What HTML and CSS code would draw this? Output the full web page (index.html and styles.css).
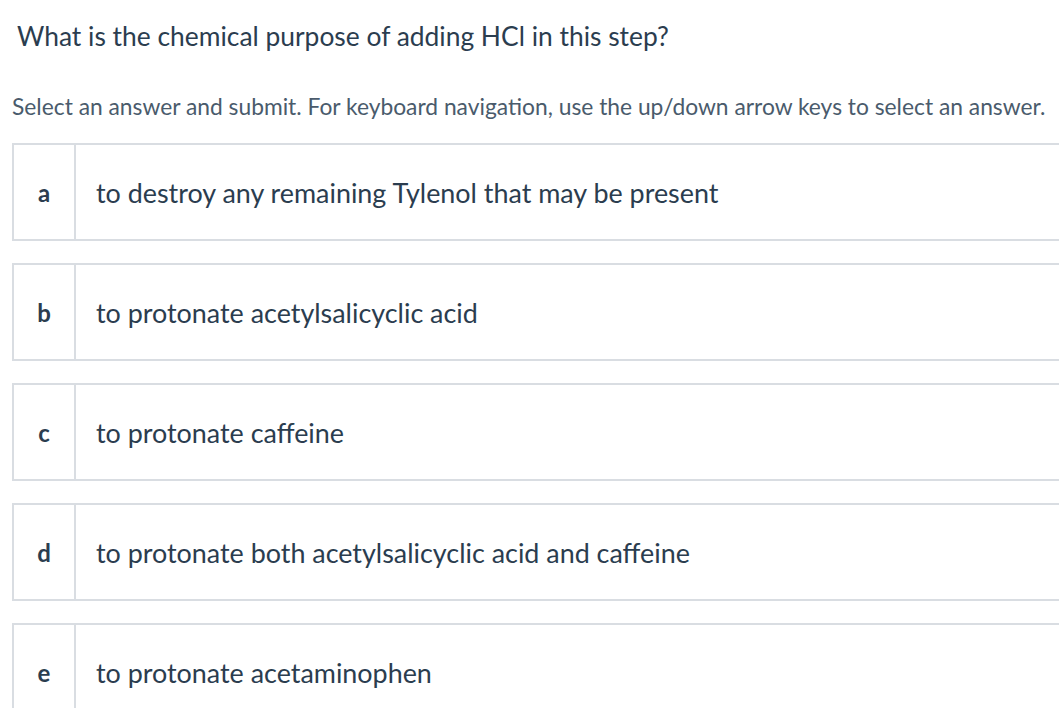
FILE: index.html
```html
<!DOCTYPE html>
<html>
<head>
<meta charset="utf-8">
<link rel="stylesheet" href="styles.css">
</head>
<body>
<div class="page">
  <h1 class="question">What is the chemical purpose of adding HCl in this step?</h1>
  <p class="instructions">Select an answer and submit. For keyboard navigation, use the up/down arrow keys to select an answer.</p>
  <ul class="options">
    <li class="option"><span class="letter">a</span><span class="text">to destroy any remaining Tylenol that may be present</span></li>
    <li class="option"><span class="letter">b</span><span class="text">to protonate acetylsalicyclic acid</span></li>
    <li class="option"><span class="letter">c</span><span class="text">to protonate caffeine</span></li>
    <li class="option"><span class="letter">d</span><span class="text">to protonate both acetylsalicyclic acid and caffeine</span></li>
    <li class="option"><span class="letter">e</span><span class="text">to protonate acetaminophen</span></li>
  </ul>
</div>
</body>
</html>
```

FILE: styles.css
```css
html, body {
  margin: 0;
  padding: 0;
  overflow: hidden;
  background: #ffffff;
}
body {
  font-family: "Lato", "Liberation Sans", sans-serif;
  color: #2b3d4f;
}
.page {
  padding: 0 0 0 12px;
}
.question {
  margin: 0;
  padding: 20px 0 0 5px;
  font-size: 26.4px;
  line-height: 32px;
  font-weight: 400;
  color: #2b3d4f;
  white-space: nowrap;
}
.instructions {
  margin: 0;
  padding-top: 40px;
  font-size: 22.8px;
  line-height: 28px;
  color: #4a5b6c;
  white-space: nowrap;
}
.options {
  list-style: none;
  margin: 0;
  padding: 23px 0 0 0;
  width: 1070px;
  display: flex;
  flex-direction: column;
  gap: 22px;
}
.option {
  display: flex;
  height: 94px;
  border: 2px solid #d9dde2;
  border-right: none;
}
.letter {
  width: 60px;
  border-right: 2px solid #d9dde2;
  display: flex;
  align-items: center;
  justify-content: center;
  font-weight: 700;
  font-size: 24px;
  color: #2b3d4f;
}
.text {
  display: flex;
  align-items: center;
  padding-left: 20px;
  font-size: 26.9px;
  color: #2b3d4f;
  white-space: nowrap;
}
```
